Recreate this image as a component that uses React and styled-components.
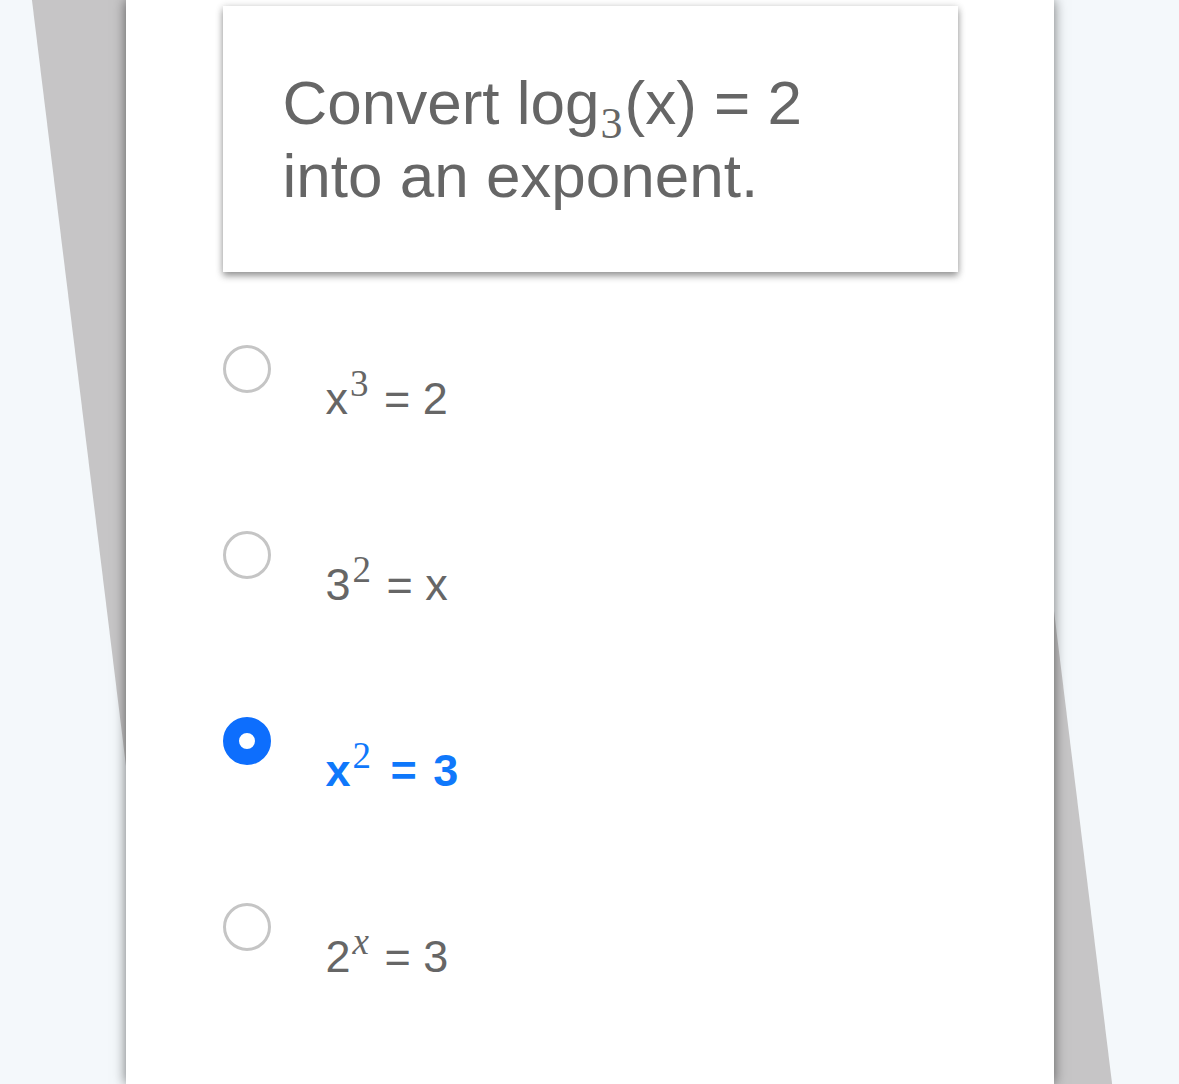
import React from "react";
import styled, { createGlobalStyle } from "styled-components";

const GlobalStyle = createGlobalStyle`
  html, body {
    margin: 0;
    padding: 0;
    background: #f4f8fb;
    overflow: hidden;
  }
`;

const options = [
  { id: 1, base: "x", exp: "3", rest: " = 2" },
  { id: 2, base: "3", exp: "2", rest: " = x" },
  { id: 3, base: "x", exp: "2", rest: " = 3", selected: true },
  { id: 4, base: "2", exp: "x", rest: " = 3", italic: true },
];

const App = () => {
  return (
    <>
      <GlobalStyle />
      <Stage>
        <BackCard />
        <Card>
          <Question>
            Convert log<Sub>3</Sub>(x) = 2 into an exponent.
          </Question>
          <OptionList>
            {options.map((o) => (
              <Option key={o.id}>
                <Radio selected={o.selected} />
                <Label selected={o.selected}>
                  {o.base}
                  <Sup italic={o.italic}>{o.exp}</Sup>
                  {o.rest}
                </Label>
              </Option>
            ))}
          </OptionList>
        </Card>
      </Stage>
    </>
  );
};

const Stage = styled.div`
  position: relative;
  height: 1084px;
  overflow: hidden;
  background: #f4f8fb;
`;

// tilted grey sheet peeking out behind the card
const BackCard = styled.div`
  position: absolute;
  left: 103px;
  top: -450px;
  width: 940px;
  height: 2000px;
  background: #c6c5c6;
  transform: rotate(-7deg);
`;

const Card = styled.main`
  position: relative;
  z-index: 1;
  width: 928px;
  height: 1084px;
  margin: 0 auto;
  padding: 6px 96px 0 97px;
  box-sizing: border-box;
  background: #fff;
  box-shadow: 0 0 12px rgba(0, 0, 0, 0.55);
`;

const Question = styled.h1`
  margin: 0;
  padding: 60px 120px 60px 60px;
  background: #fff;
  box-shadow: 0 4px 7px rgba(0, 0, 0, 0.38), 0 0 8px rgba(0, 0, 0, 0.12);
  font-family: "Liberation Sans", Arial, sans-serif;
  font-weight: 400;
  font-size: 62px;
  line-height: 73px;
  color: #666;
`;

const Sub = styled.span`
  font-family: "Liberation Serif", "Times New Roman", serif;
  font-size: 44px;
  line-height: 0;
  vertical-align: -14px;
  margin: 0 2px 0 1px;
`;

const OptionList = styled.ul`
  list-style: none;
  margin: 73px 0 0;
  padding: 0;
  display: flex;
  flex-direction: column;
  gap: 106px;
`;

const Option = styled.li`
  display: flex;
  align-items: flex-start;
  height: 80px;
`;

const Radio = styled.span`
  flex: none;
  width: 48px;
  height: 48px;
  box-sizing: border-box;
  border-radius: 50%;
  background: #fff;
  border: ${(props) =>
    props.selected ? "16px solid #0d6efd" : "3px solid #c5c5c5"};
`;

const Label = styled.span`
  margin-left: 55px;
  padding-top: 27px;
  font-family: "Liberation Sans", Arial, sans-serif;
  font-size: 45px;
  line-height: 54px;
  white-space: pre;
  font-weight: ${(props) => (props.selected ? 700 : 400)};
  word-spacing: ${(props) => (props.selected ? "4px" : "0")};
  color: ${(props) => (props.selected ? "#0f78fb" : "#666")};
`;

const Sup = styled.span`
  font-family: "Liberation Serif", "Times New Roman", serif;
  font-weight: 400;
  font-style: ${(props) => (props.italic ? "italic" : "normal")};
  font-size: 37px;
  line-height: 0;
  vertical-align: 18px;
  margin: 0 3px 0 2px;
`;

export default App;
